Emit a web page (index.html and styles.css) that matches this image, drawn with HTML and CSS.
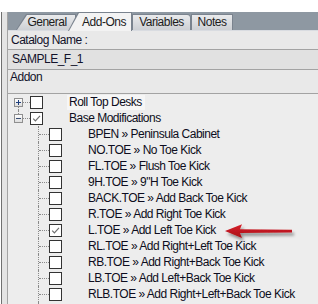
FILE: index.html
```html
<!DOCTYPE html>
<html>
<head>
<meta charset="utf-8">
<link rel="stylesheet" href="styles.css">
</head>
<body>
<div class="window">
  <div class="edge"></div>
  <div class="panel">
    <div class="tabstrip">
      <div class="tab tab-general"><div class="tab-face">General</div></div>
      <div class="tab tab-active"><div class="tab-face">Add-Ons</div></div>
      <div class="tab tab-vars"><div class="tab-face">Variables</div></div>
      <div class="tab tab-notes"><div class="tab-face">Notes</div></div>
    </div>
    <div class="content">
      <div class="field-label">Catalog Name :</div>
      <div class="textbox">SAMPLE_F_1</div>
      <div class="addon-label">Addon</div>
      <div class="tree">
        <div class="row">
          <div class="exp-cell">
            <span class="stub stub-top stub-none"></span>
            <svg class="exp" width="9" height="9" viewBox="0 0 9 9"><defs><linearGradient id="eg" x1="0" y1="0" x2="0" y2="1"><stop offset="0" stop-color="#ffffff"/><stop offset="1" stop-color="#dcdcdc"/></linearGradient></defs><rect x="0.5" y="0.5" width="8" height="8" fill="url(#eg)" stroke="#8f8f8f"/><path d="M2 4.5H7M4.5 2V7" stroke="#1f3f7c" stroke-width="1"/></svg>
            <span class="stub stub-bottom"></span>
          </div>
          <span class="hdash hdash-short"></span>
          <span class="cb"></span>
          <span class="label label-top label-hl">Roll Top Desks</span>
        </div>
        <div class="row">
          <div class="exp-cell">
            <span class="stub stub-top"></span>
            <svg class="exp" width="9" height="9" viewBox="0 0 9 9"><rect x="0.5" y="0.5" width="8" height="8" fill="url(#eg)" stroke="#8f8f8f"/><path d="M2 4.5H7" stroke="#3a4f74" stroke-width="1"/></svg>
            <span class="stub stub-bottom stub-none"></span>
          </div>
          <span class="hdash hdash-short"></span>
          <span class="cb"><svg width="11" height="11" viewBox="0 0 11 11"><path d="M2.2 5.6L4.4 7.9L9 2.8" fill="none" stroke="#6f6f6f" stroke-width="1.2"/></svg></span>
          <span class="label label-top">Base Modifications</span>
        </div>
        <div class="row child"><span class="vline"></span><span class="hdash hdash-long"></span><span class="cb"></span><span class="label">BPEN » Peninsula Cabinet</span></div>
        <div class="row child"><span class="vline"></span><span class="hdash hdash-long"></span><span class="cb"></span><span class="label">NO.TOE » No Toe Kick</span></div>
        <div class="row child"><span class="vline"></span><span class="hdash hdash-long"></span><span class="cb"></span><span class="label">FL.TOE » Flush Toe Kick</span></div>
        <div class="row child"><span class="vline"></span><span class="hdash hdash-long"></span><span class="cb"></span><span class="label">9H.TOE » 9"H Toe Kick</span></div>
        <div class="row child"><span class="vline"></span><span class="hdash hdash-long"></span><span class="cb"></span><span class="label">BACK.TOE » Add Back Toe Kick</span></div>
        <div class="row child"><span class="vline"></span><span class="hdash hdash-long"></span><span class="cb"></span><span class="label">R.TOE » Add Right Toe Kick</span></div>
        <div class="row child"><span class="vline"></span><span class="hdash hdash-long"></span><span class="cb"><svg width="11" height="11" viewBox="0 0 11 11"><path d="M2.2 5.6L4.4 7.9L9 2.8" fill="none" stroke="#6f6f6f" stroke-width="1.2"/></svg></span><span class="label">L.TOE » Add Left Toe Kick</span></div>
        <div class="row child"><span class="vline"></span><span class="hdash hdash-long"></span><span class="cb"></span><span class="label">RL.TOE » Add Right+Left Toe Kick</span></div>
        <div class="row child"><span class="vline"></span><span class="hdash hdash-long"></span><span class="cb"></span><span class="label">RB.TOE » Add Right+Back Toe Kick</span></div>
        <div class="row child"><span class="vline"></span><span class="hdash hdash-long"></span><span class="cb"></span><span class="label">LB.TOE » Add Left+Back Toe Kick</span></div>
        <div class="row child"><span class="vline"></span><span class="hdash hdash-long"></span><span class="cb"></span><span class="label">RLB.TOE » Add Right+Left+Back Toe Kick</span></div>
        <div class="row child"><span class="vline"></span></div>
      </div>
    </div>
  </div>
</div>
<svg class="arrow" width="80" height="28" viewBox="0 0 80 28">
  <defs>
    <filter id="sh" x="-20%" y="-40%" width="150%" height="200%">
      <feDropShadow dx="2" dy="3" stdDeviation="1.6" flood-color="#000" flood-opacity="0.4"/>
    </filter>
    <linearGradient id="ag" x1="0" y1="0" x2="0" y2="1">
      <stop offset="0" stop-color="#d8222b"/>
      <stop offset="1" stop-color="#a80f16"/>
    </linearGradient>
  </defs>
  <path d="M5 13 L22 6.2 L20 11.2 L72 11.8 L72 14.4 L20 14.9 L22 20 Z" fill="url(#ag)" filter="url(#sh)"/>
</svg>
</body>
</html>
```
FILE: styles.css
```css
html, body {
  margin: 0;
  padding: 0;
}
body {
  width: 318px;
  height: 304px;
  overflow: hidden;
  background: #ffffff;
  position: relative;
  font-family: "Liberation Sans", Arial, sans-serif;
  font-size: 12px;
  letter-spacing: -0.5px;
  color: #12122a;
}
.window {
  margin-top: 12px;
  height: 292px;
  display: flex;
}
.edge {
  margin-left: 1px;
  width: 5px;
  border-left: 1px solid #707070;
  border-right: 1px solid #a4a4a4;
  background: #e4e4e4;
}
.panel {
  flex: 1;
  display: flex;
  flex-direction: column;
  min-width: 0;
}
.tabstrip {
  height: 18px;
  background: #8e98a2;
  display: flex;
  align-items: flex-end;
  flex-shrink: 0;
}
.tab {
  box-sizing: border-box;
  height: 16px;
  padding: 1px 1px 0 1px;
  background: #7a838e;
  flex-shrink: 0;
}
.tab-face {
  height: 100%;
  box-sizing: border-box;
  background: linear-gradient(#e9eaec, #cdd0d4);
  line-height: 15px;
  text-align: center;
  color: #1c1c1c;
  white-space: nowrap;
}
.tab-general {
  width: 60px;
  margin-left: 8px;
  clip-path: polygon(0 100%, 10px 0, 100% 0, 100% 100%);
}
.tab-general .tab-face {
  clip-path: polygon(0 100%, 10px 0, 100% 0, 100% 100%);
  padding-left: 2px;
}
.tab-active {
  width: 64px;
  height: 19px;
  margin-left: -8px;
  margin-bottom: -1px;
  position: relative;
  z-index: 1;
  clip-path: polygon(0 100%, 10px 0, 100% 0, 100% 100%);
}
.tab-active .tab-face {
  background: #f3f3f3;
  clip-path: polygon(0 100%, 10px 0, 100% 0, 100% 100%);
  padding-top: 2px;
  padding-left: 8px;
}
.tab-vars {
  width: 59px;
  border-top-right-radius: 4px;
}
.tab-vars .tab-face {
  border-top-right-radius: 3px;
}
.tab-notes {
  width: 42px;
  padding-left: 1px;
}
.content {
  flex: 1;
  display: flex;
  flex-direction: column;
  background: #e9e9e9;
  border-top: 1px solid #d9dce1;
  min-height: 0;
}
.field-label {
  height: 18px;
  line-height: 18px;
  padding-left: 3px;
  flex-shrink: 0;
}
.textbox {
  height: 19px;
  line-height: 19px;
  padding-left: 4px;
  background: #e1e1e1;
  border-top: 1px solid #a3a3a3;
  border-bottom: 1px solid #a3a3a3;
  flex-shrink: 0;
}
.addon-label {
  height: 23px;
  line-height: 14px;
  padding-left: 2px;
  flex-shrink: 0;
}
.tree {
  flex: 1;
  background: #ededed;
  border-top: 1px solid #a3a3a3;
  overflow: hidden;
  color: #0d0d20;
}
.row {
  height: 16px;
  display: flex;
  align-items: center;
  white-space: nowrap;
}
.exp-cell {
  margin-left: 6px;
  width: 9px;
  height: 16px;
  display: flex;
  flex-direction: column;
}
.stub {
  width: 0;
  margin-left: 4px;
  border-left: 1px dotted #8a8a8a;
}
.stub-top {
  height: 4px;
}
.stub-bottom {
  height: 3px;
}
.stub-none {
  border-left-color: transparent;
}
.exp {
  display: block;
  flex-shrink: 0;
}
.hdash {
  height: 0;
  border-top: 1px dotted #8a8a8a;
  flex-shrink: 0;
}
.hdash-short {
  width: 7px;
}
.hdash-long {
  width: 10px;
}
.child {
  padding-left: 30px;
}
.vline {
  align-self: stretch;
  width: 0;
  border-left: 1px dotted #8a8a8a;
}
.cb {
  box-sizing: border-box;
  width: 13px;
  height: 13px;
  border: 1px solid #333333;
  background: #ffffff;
  flex-shrink: 0;
  display: flex;
}
.cb svg {
  display: block;
}
.label {
  margin-left: 26px;
  line-height: 15px;
}
.label-hl {
  margin-left: 24px;
  padding: 0 3px 0 2px;
  background: #f6f6f6;
}
.arrow {
  position: absolute;
  left: 220px;
  top: 218px;
}
```
